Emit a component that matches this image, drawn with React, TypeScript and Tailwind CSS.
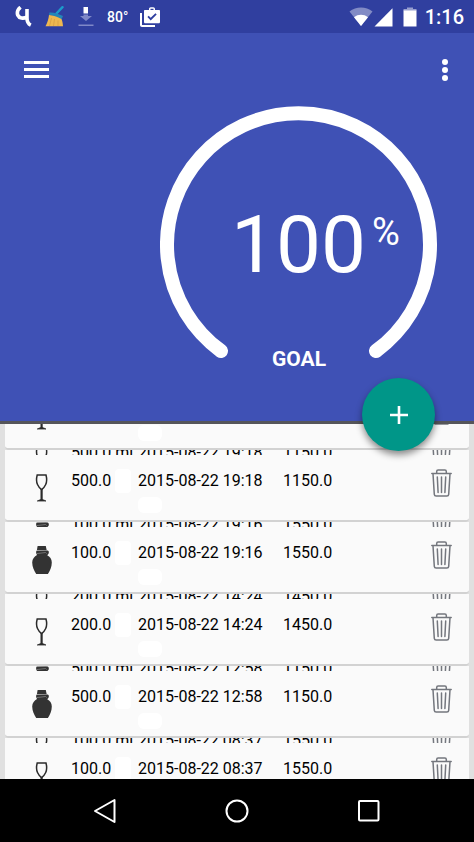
import React from 'react';

type Vessel = 'glass' | 'jug';

interface DrinkEntry {
  vessel: Vessel;
  amount: string;
  date: string;
  total: string;
}

const entries: DrinkEntry[] = [
  { vessel: 'glass', amount: '500.0', date: '2015-08-22 19:18', total: '1150.0' },
  { vessel: 'glass', amount: '500.0', date: '2015-08-22 19:18', total: '1150.0' },
  { vessel: 'jug', amount: '100.0', date: '2015-08-22 19:16', total: '1550.0' },
  { vessel: 'glass', amount: '200.0', date: '2015-08-22 14:24', total: '1450.0' },
  { vessel: 'jug', amount: '500.0', date: '2015-08-22 12:58', total: '1150.0' },
  { vessel: 'glass', amount: '100.0', date: '2015-08-22 08:37', total: '1550.0' },
];

const GlassIcon = () => (
  <svg width="20" height="28" viewBox="0 0 20 28" fill="none" stroke="#2b2b2b" strokeWidth="1.500">
    <path d="M5.200 1h8.800c.9 3.500 1 6.800-.3 9.500-1 2.200-2.400 4-4.100 5.200-1.700-1.200-3.100-3-4.100-5.200C4.200 7.800 4.300 4.500 5.200 1z" />
    <path d="M9.600 15v11.500" strokeWidth="2.200" />
    <path d="M5.300 27c1.500-1 3-1.200 4.300-1.600 1.400.4 2.900.6 4.300 1.600z" fill="#2b2b2b" strokeWidth=".8" />
  </svg>
);

const JugIcon = () => (
  <svg width="20" height="28" viewBox="0 0 20 28" fill="#333">
    <path d="M5.600 0h8.200l.9 4.300H4.900z" />
    <path d="M4.300 4.800l11.300-.3c1.500.2 1.700 3 .3 4l-.7.800c2.700 1.300 4.600 3.700 4.600 7.300 0 4.200-1.900 8.500-3.900 11.400H4.200C2.200 25.100.2 21.100.2 16.600c0-3.700 2.300-6.400 4.800-7.700l-.9-2z" />
    <path d="M4.800 7.600l8.700-1.100 1.200 1" fill="none" stroke="#999" strokeWidth=".6" />
  </svg>
);

const TrashIcon = () => (
  <svg width="21" height="28" viewBox="0 0 21 28" fill="none" stroke="#74777e" strokeWidth="1.500" strokeLinecap="round" strokeLinejoin="round">
    <path d="M.8 4.500h19.400M5.700 4.300V2.400c0-.9.500-1.500 1.400-1.500h6.800c.9 0 1.400.6 1.400 1.500v1.900" />
    <path d="M2 4.700l1.300 20.700c.1 1.200.7 1.700 1.800 1.700h10.800c1.100 0 1.700-.5 1.800-1.700L19 4.700" />
    <path d="M6.300 8l.8 15.500M10.500 8v15.500M14.700 8l-.8 15.500" />
  </svg>
);

interface EntryRowProps {
  entry: DrinkEntry;
  ghost?: boolean;
}

const EntryRow: React.FC<EntryRowProps> = ({ entry, ghost }) => (
  <div className="grid grid-cols-[39px_67px_145px_1fr_auto] items-start pt-[19px] pr-[17px] pl-[27px] text-base leading-6 text-black">
    <span className="pt-[5px]">{entry.vessel === 'glass' ? <GlassIcon /> : <JugIcon />}</span>
    <span className="flex items-center whitespace-pre">
      {entry.amount}
      {ghost ? ' ml' : <span className="ml-1 h-6 w-4 rounded-sm bg-white" />}
    </span>
    <span className="flex flex-col whitespace-nowrap">
      {entry.date}
      {!ghost && <span className="mt-1 h-4 w-6 rounded-md bg-white" />}
    </span>
    <span>{entry.total}</span>
    {ghost ? (
      <TrashIcon />
    ) : (
      <button type="button" aria-label="Delete entry">
        <TrashIcon />
      </button>
    )}
  </div>
);

const EntryCard: React.FC<{ entry: DrinkEntry }> = ({ entry }) => (
  <li className="flex h-[72px] shrink-0 flex-col rounded-b-sm border-b-2 border-[#d2d2d2] bg-[#fafafa]">
    {/* Sliver of the previous frame above the card */}
    <div className="h-[5px] shrink-0 overflow-hidden" aria-hidden="true">
      <div className="-mt-[28px]">
        <EntryRow entry={entry} ghost />
      </div>
    </div>
    <div className="h-[65px] overflow-hidden">
      <div className="-mt-[5px]">
        <EntryRow entry={entry} />
      </div>
    </div>
  </li>
);

const StatusBar = () => (
  <div className="flex h-[33px] shrink-0 items-center justify-between bg-[#303f9f] pr-[10px] pl-[15px] text-white">
    <div className="flex items-center gap-3">
      <svg width="18" height="21" viewBox="0 0 18 21" fill="none" stroke="#fff" strokeWidth="3.600" strokeLinejoin="round">
        <path d="M5.500 1.200C2.800 3.500 1.800 6.500 2.800 9.300c1.300 3 5.200 3.700 9.400 1.700M12 3v9c0 3.500.8 5.800 3.800 7.200" />
      </svg>
      <svg width="20" height="21" viewBox="0 0 20 21">
        <path d="M17.500 1.200L10.500 8.500" stroke="#1c9ccb" strokeWidth="2.400" strokeLinecap="round" />
        <path d="M4.500 6.500c4-.5 9 1.500 13.500 3.500l-1.500 3.500C12 11 8 9.500 4 9z" fill="#2386b8" />
        <path d="M4 9c4 .3 8.500 1.800 12.500 4 1 2.500 1.300 4.500 1.500 7.200H.5C2.500 16.500 3.500 13 4 9z" fill="#eeb850" />
        <path d="M6.500 12L4.500 20M9.500 13l-1 7M13 14.500V20" stroke="#d49a42" strokeWidth=".7" />
      </svg>
      <svg width="18" height="21" viewBox="0 0 18 21">
        <path d="M6.500 1h4.500v6.500H6.500z" fill="#fff" />
        <path d="M6.500 8.500H11v1.500h4l-6 5-6-5h3.500zM1.500 18.500h15V20h-15z" fill="#7f88c8" />
      </svg>
      <span className="text-[14px] leading-5 font-medium">80°</span>
      <svg width="20" height="20" viewBox="0 0 20 20" fill="#fff">
        <path d="M0 6h2v12h13v2H2c-1.100 0-2-.9-2-2z" />
        <path fillRule="evenodd" d="M9 3V2c0-1 .8-1.700 1.700-1.700h2.600c.9 0 1.700.7 1.700 1.700v1h4c.6 0 1 .4 1 1v11c0 .8-.6 1.300-1.300 1.300H5.300C4.600 16.300 4 15.800 4 15V4c0-.6.400-1 1-1zm1.500 0h3V1.800h-3zM10.700 13.500l6-6-1.300-1.300-4.700 4.600-2-2-1.300 1.300z" />
      </svg>
    </div>
    <div className="flex items-center">
      <svg width="24" height="20" viewBox="0 0 24 20" fill="#fff">
        <path d="M12 19L.5 4.500C7-.8 17-.8 23.500 4.500z" opacity=".4" />
        <path d="M12 19L5 10.200c4-3.300 10-3.300 14 0z" />
      </svg>
      <svg width="20" height="20" viewBox="0 0 20 20" fill="#fff">
        <path d="M1.500 19.500L19.500 1.200v18.300z" />
      </svg>
      <svg className="ml-[10px]" width="14" height="20" viewBox="0 0 14 20" fill="#fff">
        <path d="M4 .5h6v1.500h3.500v2H.5V2H4z" opacity=".5" />
        <path d="M.5 3.500h13v16H.5z" />
      </svg>
      <time className="ml-2 text-[20px] leading-6 font-medium">1:16</time>
    </div>
  </div>
);

const Gauge = () => (
  <section className="grid w-[278px] self-end" aria-label="Daily goal">
    <svg className="col-start-1 row-start-1" width="278" height="278" viewBox="0 0 278 278" fill="none">
      <path d="M61 245A131.500 131.500 0 1 1 216 245" stroke="#fff" strokeWidth="14" strokeLinecap="round" />
    </svg>
    <div className="col-start-1 row-start-1 flex flex-col pt-[99px] text-white">
      <div className="flex items-start gap-[6px] pl-[71px]">
        <span className="text-[80px] leading-none">100</span>
        <span className="mt-2 text-[38px] leading-none">%</span>
      </div>
      <span className="mt-[64px] text-center text-[21px] leading-none font-bold">GOAL</span>
    </div>
  </section>
);

const Header = () => (
  <header className="relative flex shrink-0 flex-col border-b-3 border-[#55555a] bg-[#3f51b5] pr-9 pb-[37px]">
    <div className="-mr-9 flex h-[73px] items-center justify-between pr-[19px] pl-6">
      <button type="button" aria-label="Menu" className="flex flex-col gap-[4px]">
        <span className="h-[3px] w-[25px] bg-white" />
        <span className="h-[3px] w-[25px] bg-white" />
        <span className="h-[3px] w-[25px] bg-white" />
      </button>
      <button type="button" aria-label="More options" className="flex w-5 flex-col items-center gap-[2px]">
        <span className="size-[6px] rounded-full bg-white" />
        <span className="size-[6px] rounded-full bg-white" />
        <span className="size-[6px] rounded-full bg-white" />
      </button>
    </div>
    <Gauge />
    <button
      type="button"
      aria-label="Add drink"
      className="absolute right-[39px] -bottom-[30px] z-10 flex size-[73px] items-center justify-center rounded-full bg-[#009688] shadow-[0_4px_7px_rgba(0,0,0,0.45)]"
    >
      <svg width="18" height="18" viewBox="0 0 18 18" stroke="#fff" strokeWidth="2.600">
        <path d="M9 0v18M0 9h18" />
      </svg>
    </button>
  </header>
);

const NavBar = () => (
  <nav className="flex h-[63px] shrink-0 items-center justify-center gap-[108px] bg-black">
    <button type="button" aria-label="Back">
      <svg width="24" height="26" viewBox="0 0 24 26" fill="none" stroke="#fff" strokeWidth="2" strokeLinejoin="round">
        <path d="M2 13L21.500 2v22z" />
      </svg>
    </button>
    <button type="button" aria-label="Home">
      <svg width="24" height="24" viewBox="0 0 24 24" fill="none" stroke="#fff" strokeWidth="2">
        <circle cx="12" cy="12" r="10.500" />
      </svg>
    </button>
    <button type="button" aria-label="Recent apps">
      <svg width="24" height="24" viewBox="0 0 24 24" fill="none" stroke="#fff" strokeWidth="2">
        <rect x="2" y="2" width="19.500" height="19.500" rx="1" />
      </svg>
    </button>
  </nav>
);

export default function App() {
  return (
    <div className="flex h-screen flex-col overflow-hidden bg-[#e0e0e0] font-['Roboto',sans-serif]">
      <StatusBar />
      <Header />
      <main className="min-h-0 flex-1 overflow-hidden px-[5px]">
        {/* The list is scrolled part of the way through its first card */}
        <ul className="-mt-[46px] flex flex-col">
          {entries.map((entry, index) => (
            <EntryCard key={index} entry={entry} />
          ))}
        </ul>
      </main>
      <NavBar />
    </div>
  );
}
